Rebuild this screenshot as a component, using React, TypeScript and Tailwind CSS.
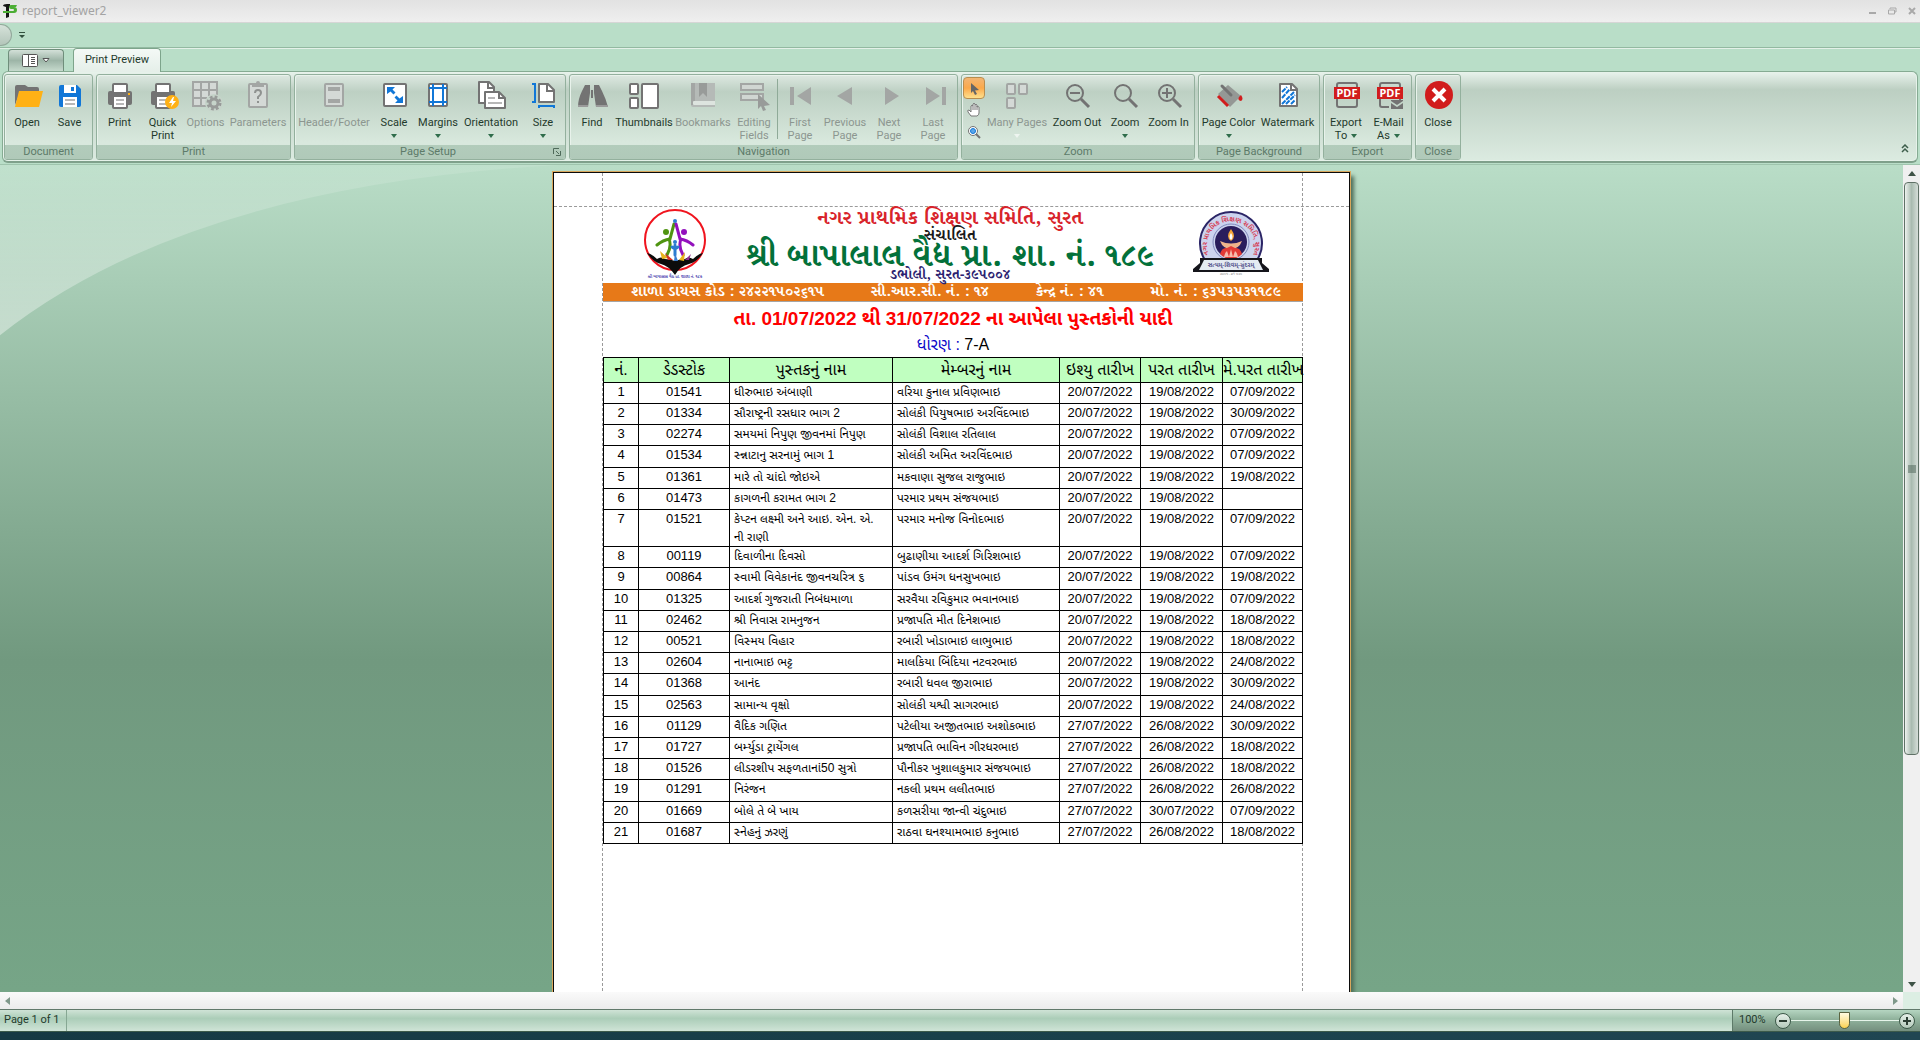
import React from 'react';

type Tool = {
  label: string;
  second?: string;
  width: string;
  icon: React.ReactNode;
  disabled?: boolean;
  menu?: boolean;
};

type Book = {
  stock: string;
  title: string;
  member: string;
  issued: string;
  due: string;
  returned: string;
};

const GRAY = '#737373';
const MUTED = '#a3a6a4';
const BLUE = '#1177d7';
const ORANGE = '#ffb115';
const RED = '#d11c1c';

const Icon: React.FC<{ children: React.ReactNode }> = ({ children }) => (
  <svg viewBox="0 0 32 32" className="h-8 w-8 shrink-0" fill="none" aria-hidden="true">
    {children}
  </svg>
);

const Printer = () => (
  <>
    <rect x="4" y="12" width="24" height="14" rx="2" fill={GRAY} />
    <rect x="8" y="4" width="16" height="10" rx="2" fill={GRAY} />
    <rect x="10" y="6" width="12" height="7" fill="#fff" />
    <rect x="8" y="18" width="16" height="12" rx="2" fill={GRAY} />
    <rect x="10" y="18" width="12" height="10" fill="#fff" />
    <path d="M12 21h8M12 25h8" stroke="#a0a0a0" strokeWidth="1.5" />
  </>
);

const Lens = () => (
  <>
    <circle cx="14" cy="13" r="8" stroke={GRAY} strokeWidth="2" />
    <path d="M20 19l8 8" stroke={GRAY} strokeWidth="3" />
  </>
);

const Pdf = () => (
  <>
    <rect x="4" y="8" width="26" height="12" fill={RED} />
    <text x="17" y="18" textAnchor="middle" fontFamily="Noto Sans, sans-serif" fontSize="11" fontWeight="700" fill="#fff">
      PDF
    </text>
  </>
);

const icons = {
  open: (
    <Icon>
      <path d="M4 26V8q0-2 2-2h8l3 2h9q2 0 2 2v3H9z" fill={GRAY} />
      <path d="M8 12h24l-4 16H4z" fill={ORANGE} />
    </Icon>
  ),
  save: (
    <Icon>
      <path d="M5 8q0-2 2-2h16l4 4v16q0 2-2 2H7q-2 0-2-2z" fill={BLUE} />
      <rect x="10" y="6" width="12" height="8" fill="#fff" />
      <rect x="17" y="8" width="3" height="4" fill={BLUE} />
      <rect x="9" y="18" width="14" height="10" fill="#fff" />
      <path d="M11 21h10M11 25h10" stroke="#a0a0a0" strokeWidth="1.5" />
    </Icon>
  ),
  print: (
    <Icon>
      <Printer />
      <rect x="24" y="14" width="2" height="2" fill={ORANGE} />
    </Icon>
  ),
  quick: (
    <Icon>
      <Printer />
      <circle cx="25" cy="23" r="7" fill={ORANGE} />
      <path d="M26 18l-4 6h3l-1 4 5-6h-3l1-4z" fill="#fff" />
    </Icon>
  ),
  options: (
    <Icon>
      <rect x="3" y="3" width="24" height="24" fill="#d4d9d6" stroke={MUTED} strokeWidth="2" />
      <path d="M11 3v24M19 3v14M3 11h24M3 19h14" stroke={MUTED} strokeWidth="2" />
      <circle cx="24" cy="24" r="9" fill="#c6d4ca" />
      <circle cx="24" cy="24" r="4" stroke="#989b99" strokeWidth="3" />
      <circle cx="24" cy="24" r="6" stroke="#989b99" strokeWidth="3" strokeDasharray="2.6 2.1" />
    </Icon>
  ),
  parameters: (
    <Icon>
      <rect x="7" y="5" width="18" height="23" rx="1" fill="#d4d9d6" stroke={MUTED} strokeWidth="2" />
      <path d="M10 8V4h4q0-2 2-2t2 2h4v4z" fill={MUTED} />
      <path d="M13 14q0-3 3-3t3 3q0 2-3 4v2" stroke="#8f9290" strokeWidth="2" />
      <rect x="15" y="22" width="2" height="2" fill="#8f9290" />
    </Icon>
  ),
  headerFooter: (
    <Icon>
      <rect x="7" y="5" width="18" height="22" rx="1" fill="#d4d9d6" stroke={MUTED} strokeWidth="2" />
      <path d="M10 10h12M10 22h12" stroke={MUTED} strokeWidth="4" />
    </Icon>
  ),
  scale: (
    <Icon>
      <rect x="6" y="5" width="22" height="22" rx="1" fill="#fff" stroke={GRAY} strokeWidth="2" />
      <path d="M9 8h8l-2.500 2.500 3 3-2 2-3-3L9 15zM25 24h-8l2.500-2.500-3-3 2-2 3 3L25 17z" fill={BLUE} />
    </Icon>
  ),
  margins: (
    <Icon>
      <rect x="7" y="5" width="18" height="22" rx="1" fill="#fff" stroke={GRAY} strokeWidth="2" />
      <path d="M11 5v22M21 5v22M7 9h18M7 23h18" stroke={BLUE} strokeWidth="2" />
    </Icon>
  ),
  orientation: (
    <Icon>
      <path d="M4 3h10l5 5v16H4z" fill="#fff" stroke={GRAY} strokeWidth="2" strokeLinejoin="round" />
      <path d="M13 3v6h6" stroke={GRAY} strokeWidth="2" />
      <path d="M10 13h14l6 6v10H10z" fill="#fff" stroke={GRAY} strokeWidth="2" strokeLinejoin="round" />
      <path d="M24 13v6h6" stroke={GRAY} strokeWidth="2" />
      <path d="M13 19h7M13 24h14" stroke="#a0a0a0" strokeWidth="1.500" />
    </Icon>
  ),
  size: (
    <Icon>
      <path d="M12 5h9l6 6v12H12z" fill="#fff" stroke={GRAY} strokeWidth="2" strokeLinejoin="round" />
      <path d="M20 5v7h7" stroke={GRAY} strokeWidth="2" />
      <path d="M5 5h3v18H5M12 29v-2h15v2" stroke={BLUE} strokeWidth="2" />
    </Icon>
  ),
  find: (
    <Icon>
      <path d="M9 6h5v8l-2 14H2q0-8 4-16zM18 6h5l3 6q4 8 6 16H20l-2-14z" fill={GRAY} />
      <path d="M16 11v8" stroke={GRAY} strokeWidth="2" />
      <path d="M2 27h10M20 27h12" stroke="#9a9a9a" strokeWidth="2" />
    </Icon>
  ),
  thumbnails: (
    <Icon>
      <g fill="#fff" stroke={GRAY} strokeWidth="2">
        <rect x="2" y="5" width="8" height="10" rx="1" />
        <rect x="2" y="19" width="8" height="10" rx="1" />
        <rect x="14" y="5" width="16" height="24" rx="1" />
      </g>
    </Icon>
  ),
  bookmarks: (
    <Icon>
      <path d="M4 26V6q0-2 2-2h22v24H6q-2 0-2-2z" fill="#b5bab7" />
      <rect x="4" y="4" width="4" height="22" fill={MUTED} />
      <path d="M6 23q0-1 1-1h21v4H7q-1 0-1-1z" fill="#dde4df" />
      <path d="M12 4h8v14l-4-4-4 4z" fill="#989b99" />
    </Icon>
  ),
  editing: (
    <Icon>
      <g fill="#d0d6d2" stroke={MUTED} strokeWidth="2">
        <rect x="3" y="5" width="22" height="6" />
        <rect x="3" y="15" width="22" height="6" />
      </g>
      <path d="M20 15l12 11-6 1 2 4-3 1-2-5-3 3z" fill="#989b99" />
    </Icon>
  ),
  first: (
    <Icon>
      <path d="M8 8v18" stroke={MUTED} strokeWidth="4" />
      <path d="M27 8v18L13 17z" fill={MUTED} />
    </Icon>
  ),
  previous: (
    <Icon>
      <path d="M23 8v18L8 17z" fill={MUTED} />
    </Icon>
  ),
  next: (
    <Icon>
      <path d="M12 8v18l14-9z" fill={MUTED} />
    </Icon>
  ),
  last: (
    <Icon>
      <path d="M9 8v18l14-9z" fill={MUTED} />
      <path d="M27 8v18" stroke={MUTED} strokeWidth="4" />
    </Icon>
  ),
  manyPages: (
    <Icon>
      <g fill="#d4d9d6" stroke={MUTED} strokeWidth="2">
        <rect x="6" y="5" width="8" height="10" rx="1" />
        <rect x="18" y="5" width="8" height="10" rx="1" />
        <rect x="6" y="19" width="8" height="10" rx="1" />
      </g>
    </Icon>
  ),
  zoomOut: (
    <Icon>
      <g transform="translate(0 1)">
        <Lens />
        <path d="M9 13h10" stroke={GRAY} strokeWidth="2" />
      </g>
    </Icon>
  ),
  zoom: (
    <Icon>
      <g transform="translate(0 1)">
        <Lens />
      </g>
    </Icon>
  ),
  zoomIn: (
    <Icon>
      <g transform="translate(0 1)">
        <Lens />
        <path d="M9 13h10M14 8v10" stroke={GRAY} strokeWidth="2" />
      </g>
    </Icon>
  ),
  pageColor: (
    <Icon>
      <path d="M15 6l13 11-11 11L5 15z" fill="#949895" />
      <path d="M5 17l10 10" stroke={RED} strokeWidth="3" />
      <path d="M9 7l9 9" stroke={GRAY} strokeWidth="3" strokeLinecap="round" />
      <path d="M28 16q3 4 0 6-4-1-2-4z" fill={RED} />
    </Icon>
  ),
  watermark: (
    <Icon>
      <path d="M8 5h12l5 5v17H8z" fill="#fff" stroke={GRAY} strokeWidth="2" strokeLinejoin="round" />
      <path d="M19 5v6h6" stroke={GRAY} strokeWidth="2" />
      <path d="M10 13l5-5M10 19l8-9M10 25l12-12M14 25l9-9M19 25l4-4" stroke={BLUE} strokeWidth="2" strokeDasharray="5 1" />
    </Icon>
  ),
  exportPdf: (
    <Icon>
      <rect x="7" y="4" width="20" height="24" rx="2" stroke={GRAY} strokeWidth="2" />
      <Pdf />
    </Icon>
  ),
  mailPdf: (
    <Icon>
      <path d="M27 22V6q0-2-2-2H9Q7 4 7 6v20q0 2 2 2h7" stroke={GRAY} strokeWidth="2" />
      <Pdf />
      <path d="M18 22l6 4 6-4v-1H18zM18 24v6h12v-6l-6 4z" fill={GRAY} />
    </Icon>
  ),
  close: (
    <Icon>
      <circle cx="17" cy="16" r="14" fill={RED} />
      <path d="M11 10l12 12M23 10L11 22" stroke="#fff" strokeWidth="4" />
    </Icon>
  ),
};

const groups: { name: string; launcher?: boolean; pointer?: boolean; tools: Tool[] }[] = [
  {
    name: 'Document',
    tools: [
      { label: 'Open', width: 'w-[42px]', icon: icons.open },
      { label: 'Save', width: 'w-[43px]', icon: icons.save },
    ],
  },
  {
    name: 'Print',
    tools: [
      { label: 'Print', width: 'w-[43px]', icon: icons.print },
      { label: 'Quick', second: 'Print', width: 'w-[43px]', icon: icons.quick },
      { label: 'Options', width: 'w-[43px]', icon: icons.options, disabled: true },
      { label: 'Parameters', width: 'w-[62px]', icon: icons.parameters, disabled: true },
    ],
  },
  {
    name: 'Page Setup',
    launcher: true,
    tools: [
      { label: 'Header/Footer', width: 'w-[76px]', icon: icons.headerFooter, disabled: true },
      { label: 'Scale', width: 'w-[44px]', icon: icons.scale, menu: true },
      { label: 'Margins', width: 'w-[44px]', icon: icons.margins, menu: true },
      { label: 'Orientation', width: 'w-[62px]', icon: icons.orientation, menu: true },
      { label: 'Size', width: 'w-[42px]', icon: icons.size, menu: true },
    ],
  },
  {
    name: 'Navigation',
    tools: [
      { label: 'Find', width: 'w-[42px]', icon: icons.find },
      { label: 'Thumbnails', width: 'w-[62px]', icon: icons.thumbnails },
      { label: 'Bookmarks', width: 'w-[56px]', icon: icons.bookmarks, disabled: true },
      { label: 'Editing', second: 'Fields', width: 'w-[46px]', icon: icons.editing, disabled: true },
      { label: 'First', second: 'Page', width: 'w-[44px]', icon: icons.first, disabled: true },
      { label: 'Previous', second: 'Page', width: 'w-[46px]', icon: icons.previous, disabled: true },
      { label: 'Next', second: 'Page', width: 'w-[42px]', icon: icons.next, disabled: true },
      { label: 'Last', second: 'Page', width: 'w-[46px]', icon: icons.last, disabled: true },
    ],
  },
  {
    name: 'Zoom',
    pointer: true,
    tools: [
      { label: 'Many Pages', width: 'w-[62px]', icon: icons.manyPages, disabled: true, menu: true },
      { label: 'Zoom Out', width: 'w-[58px]', icon: icons.zoomOut },
      { label: 'Zoom', width: 'w-[38px]', icon: icons.zoom, menu: true },
      { label: 'Zoom In', width: 'w-[49px]', icon: icons.zoomIn },
    ],
  },
  {
    name: 'Page Background',
    tools: [
      { label: 'Page Color', width: 'w-[57px]', icon: icons.pageColor, menu: true },
      { label: 'Watermark', width: 'w-[61px]', icon: icons.watermark },
    ],
  },
  {
    name: 'Export',
    tools: [
      { label: 'Export', second: 'To', width: 'w-[42px]', icon: icons.exportPdf, menu: true },
      { label: 'E-Mail', second: 'As', width: 'w-[43px]', icon: icons.mailPdf, menu: true },
    ],
  },
  { name: 'Close', tools: [{ label: 'Close', width: 'w-[42px]', icon: icons.close }] },
];

const columns = ['નં.', 'ડેડસ્ટોક', 'પુસ્તકનું નામ', 'મેમ્બરનું નામ', 'ઇશ્યુ તારીખ', 'પરત તારીખ', 'મે.પરત તારીખ'];

const book = (stock: string, title: string, member: string, issued: string, due: string, returned: string): Book => ({
  stock,
  title,
  member,
  issued,
  due,
  returned,
});

const books: Book[] = [
  book('01541', 'ધીરુભાઇ અંબાણી', 'વરિયા કુનાલ પ્રવિણભાઇ', '20/07/2022', '19/08/2022', '07/09/2022'),
  book('01334', 'સૌરાષ્ટ્રની રસધાર ભાગ 2', 'સોલંકી પિયુષભાઇ અરવિંદભાઇ', '20/07/2022', '19/08/2022', '30/09/2022'),
  book('02274', 'સમયમાં નિપુણ જીવનમાં નિપુણ', 'સોલંકી વિશાલ રતિલાલ', '20/07/2022', '19/08/2022', '07/09/2022'),
  book('01534', 'સ્ન્નાટાનુ સરનામું ભાગ 1', 'સોલંકી અમિત અરવિંદભાઇ', '20/07/2022', '19/08/2022', '07/09/2022'),
  book('01361', 'મારે તો ચાંદો જોઇએ', 'મકવાણા સુજલ રાજુભાઇ', '20/07/2022', '19/08/2022', '19/08/2022'),
  book('01473', 'કાગળની કરામત ભાગ 2', 'પરમાર પ્રથમ સંજયભાઇ', '20/07/2022', '19/08/2022', ''),
  book('01521', 'કેપ્ટન લક્ષ્મી અને આઇ. એન. એ.\nની રાણી', 'પરમાર મનોજ વિનોદભાઇ', '20/07/2022', '19/08/2022', '07/09/2022'),
  book('00119', 'દિવાળીના દિવસો', 'બુઢાણીયા આદર્શ ગિરિશભાઇ', '20/07/2022', '19/08/2022', '07/09/2022'),
  book('00864', 'સ્વામી વિવેકાનંદ જીવનચરિત્ર ૬', 'પાંડવ ઉમંગ ધનસુખભાઇ', '20/07/2022', '19/08/2022', '19/08/2022'),
  book('01325', 'આદર્શ ગુજરાતી નિબંધમાળા', 'સરવૈયા રવિકુમાર ભવાનભાઇ', '20/07/2022', '19/08/2022', '07/09/2022'),
  book('02462', 'શ્રી નિવાસ રામનુજન', 'પ્રજાપતિ મીત દિનેશભાઇ', '20/07/2022', '19/08/2022', '18/08/2022'),
  book('00521', 'વિસ્મય વિહાર', 'રબારી ખોડાભાઇ લાભુભાઇ', '20/07/2022', '19/08/2022', '18/08/2022'),
  book('02604', 'નાનાભાઇ ભટ્ટ', 'માલકિયા બિંદિયા નટવરભાઇ', '20/07/2022', '19/08/2022', '24/08/2022'),
  book('01368', 'આનંદ', 'રબારી ધવલ જીરાભાઇ', '20/07/2022', '19/08/2022', '30/09/2022'),
  book('02563', 'સામાન્ય વૃક્ષો', 'સોલંકી યશ્વી સાગરભાઇ', '20/07/2022', '19/08/2022', '24/08/2022'),
  book('01129', 'વૈદિક ગણિત', 'પટેલીયા અજીતભાઇ અશોકભાઇ', '27/07/2022', '26/08/2022', '30/09/2022'),
  book('01727', 'બર્મ્યુડા ટ્રાયેંગલ', 'પ્રજાપતિ ભાવિન ગીરધરભાઇ', '27/07/2022', '26/08/2022', '18/08/2022'),
  book('01526', 'લીડરશીપ સફળતાનાં50 સુત્રો', 'પૌનીકર ખુશાલકુમાર સંજયભાઇ', '27/07/2022', '26/08/2022', '18/08/2022'),
  book('01291', 'નિરંજન', 'નકલી પ્રથમ લલીતભાઇ', '27/07/2022', '26/08/2022', '26/08/2022'),
  book('01669', 'બોલે તે બે ખાય', 'કળસરીયા જાન્વી ચંદુભાઇ', '27/07/2022', '30/07/2022', '07/09/2022'),
  book('01687', 'સ્નેહનું ઝરણું', 'રાઠવા ઘનશ્યામભાઇ કનુભાઇ', '27/07/2022', '26/08/2022', '18/08/2022'),
];

const Caret: React.FC<{ disabled?: boolean }> = ({ disabled }) => (
  <svg viewBox="0 0 6 4" className="h-1 w-[6px] shrink-0" aria-hidden="true">
    <path d="M0 0h6L3 4z" fill={disabled ? '#eef5f0' : '#2f6d4b'} />
  </svg>
);

const ToolButton: React.FC<{ tool: Tool }> = ({ tool }) => (
  <button
    type="button"
    disabled={tool.disabled}
    className={`flex shrink-0 flex-col items-center whitespace-nowrap pt-1 ${tool.width} ${
      tool.disabled ? 'text-[#8c9690]' : 'text-[#1f3a2c]'
    }`}
  >
    {tool.icon}
    <span className="mt-[5px] leading-[13px]">{tool.label}</span>
    <span className="flex h-[13px] items-center gap-1 leading-[13px]">
      {tool.second}
      {tool.menu && <Caret disabled={tool.disabled} />}
    </span>
  </button>
);

const PointerTools = () => (
  <div className="flex w-[23px] shrink-0 flex-col items-start pt-[2px]">
    <button
      type="button"
      aria-label="Pointer"
      className="flex h-[22px] w-[22px] items-center justify-center rounded-sm border border-[#b98d4e] bg-linear-to-b from-[#f2b572] via-[#fba94a] to-[#fde08c]"
    >
      <svg viewBox="0 0 16 16" className="h-4 w-4">
        <path d="M5 3l8 7-4 .500 2 3.500-2 1-2-4-2 2z" fill="#666" />
      </svg>
    </button>
    <button type="button" aria-label="Hand Tool" className="flex h-[22px] w-[22px] items-center justify-center">
      <svg viewBox="0 0 16 16" className="h-4 w-4">
        <path
          d="M5 14l-3-4q-1-2 1-2l2 2V4q1-1.500 2 0V2q1-1.500 2 0v1q1-1.500 2 0v2q1.500-1 2 0v6q0 2-2 3zM7 4v4M9 3v5M11 4v4"
          fill="#fff"
          stroke="#777"
        />
      </svg>
    </button>
    <button type="button" aria-label="Magnifier" className="flex h-[22px] w-[22px] items-center justify-center">
      <svg viewBox="0 0 16 16" className="h-4 w-4" fill="none">
        <circle cx="7" cy="7" r="4.500" fill="#fff" stroke="#737373" />
        <circle cx="7" cy="7" r="2.500" fill="#5aa5e8" stroke={BLUE} />
        <path d="M10 10l4 4" stroke="#737373" strokeWidth="2" />
      </svg>
    </button>
  </div>
);

const Ribbon = () => (
  <div className="mx-[2px] flex h-[92px] items-start gap-[3px] rounded-md border border-[#86ab93] border-b-2 border-b-[#7fa08b] bg-linear-to-b from-[#e9f3ed] from-0% via-[#bccfc2] via-20% to-[#dcebe1] pr-2 pl-px pt-[2px] shadow-[inset_0_0_0_1px_#e6f2ea]">
    {groups.map((group) => (
      <section
        key={group.name}
        aria-label={group.name}
        className="flex h-[86px] shrink-0 flex-col overflow-hidden rounded-[3px] border border-[#93b09d] bg-linear-to-b from-[#dde8e1] from-0% via-[#bdd0c3] via-20% to-[#d8e8dd] to-80% shadow-[inset_1px_1px_0_#e8f2eb]"
      >
        <div className="flex h-[70px] px-px">
          {group.pointer && <PointerTools />}
          {group.tools.map((tool) => (
            <React.Fragment key={tool.label}>
              {tool.label === 'First' && <div className="mt-1 h-[60px] w-px shrink-0 bg-[#8faa98]" />}
              <ToolButton tool={tool} />
            </React.Fragment>
          ))}
        </div>
        <div className="flex h-[14px] items-center bg-linear-to-b from-[#b2ccbb] to-[#b0c9b9] leading-[14px] text-[#5d7a69]">
          <span className={`grow text-center ${group.launcher ? 'pl-2' : ''}`}>{group.name}</span>
          {group.launcher && (
            <button type="button" aria-label="Page Setup options" className="mr-1">
              <svg viewBox="0 0 8 8" className="h-2 w-2" fill="none">
                <path d="M6 .500H.500V6M3 3l3 3M7.500 3v4.500H3" stroke="#4f6a5a" />
              </svg>
            </button>
          )}
        </div>
      </section>
    ))}
    <button type="button" aria-label="Collapse the Ribbon" className="mt-auto mb-2 ml-auto">
      <svg viewBox="0 0 8 9" className="h-[9px] w-2" fill="none">
        <path d="M1 4l3-3 3 3M1 8l3-3 3 3" stroke="#3d5e4b" strokeWidth="1.500" />
      </svg>
    </button>
  </div>
);

const SchoolLogo = () => (
  <svg viewBox="0 0 64 72" className="h-[72px] w-16 shrink-0" role="img" aria-label="School logo">
    <circle cx="32" cy="31" r="30" fill="#fff" stroke="#f0141e" strokeWidth="2" />
    <g fill="none" strokeLinecap="round">
      <path d="M31 15L27 30q-7 1-13 6M26 30q3 7-2 16" stroke="#4f9411" strokeWidth="3" />
      <path d="M33 15l4 15q7 1 13 6M38 30q-3 7 2 16" stroke="#9311bd" strokeWidth="3" />
      <path d="M32 36v10M29 38l3 2 3-2" stroke="#2b7cd0" strokeWidth="3" />
    </g>
    <circle cx="23" cy="23" r="3" fill="#4f9411" />
    <circle cx="41" cy="23" r="3" fill="#9311bd" />
    <circle cx="32" cy="12" r="2" fill="#2b7cd0" />
    <circle cx="32" cy="33" r="2" fill="#2b7cd0" />
    <path d="M4 44q6 9 14 11 8 2 14 11 5-9 14-11 8-2 14-11-5 1-10 6-5-3-8 0-5 0-10 2-5-2-10-2-4-3-8 0-5-5-10-6z" fill="#0c0c0c" />
    <path d="M19 50l-2-8 8 7z" fill="#e8b21b" />
    <path d="M25 51l-3-7 8 7z" fill="#d53322" />
    <path d="M31 52l1-8 3 8z" fill="#3a7ed0" />
    <path d="M36 51l6-8-1 9z" fill="#e8b21b" />
    <path d="M42 51l6-6-2 6z" fill="#8c2e8e" />
    <text x="32" y="69" textAnchor="middle" fontSize="4" fontWeight="700" fill="#4a3fb0">
      શ્રી બાપાલાલ વૈદ્ય પ્રા. શાળા નં. ૧૮૯
    </text>
  </svg>
);

const BoardLogo = () => (
  <svg viewBox="0 0 76 68" className="h-[68px] w-[76px] shrink-0" role="img" aria-label="Board emblem">
    <defs>
      <path id="arch" d="M16 46A24 24 0 1 1 60 46" />
    </defs>
    <path d="M12 51A31 31 0 1 1 64 51z" fill="#ccd3ee" stroke="#2b2566" strokeWidth="2" />
    <circle cx="38" cy="33" r="18" fill="#ccd3ee" stroke="#7f88bb" />
    <circle cx="38" cy="33" r="16" fill="#2a1d5c" />
    <text fontSize="7" fontWeight="700" fill="#d6455a">
      <textPath href="#arch" startOffset="50%" textAnchor="middle">
        નગર પ્રાથમિક શિક્ષણ સમિતિ, સુરત
      </textPath>
    </text>
    <path d="M38 20q6 8 0 12-6-4 0-12z" fill="#f6a53a" />
    <path d="M38 24q3 4 0 7-3-3 0-7z" fill="#fff" />
    <path d="M27 32q11 5 22 0-3 8-11 8t-11-8z" fill="#efb48c" />
    <path d="M27 45q2-7 7-6l4-2 4 2q5-1 7 6-5 5-11 5t-11-5z" fill="#e23b36" />
    <path d="M31 48q1-5 3-6l2 6 2-8 2 8 2-6q2 1 3 6z" fill="#f6bcae" />
    <path d="M7 49h62v5l7 6v3H0v-3l7-6z" fill="#15151b" />
    <path d="M11 51h54l5 10H6z" fill="#e4ebf2" />
    <text x="38" y="58" textAnchor="middle" fontSize="6" fontWeight="700" fill="#5a5a90">
      સત્યમ્-શિવમ્-સુંદરમ્
    </text>
    <text x="38" y="66" textAnchor="middle" fontSize="3" fill="#777">
      સ્થાપના - સને ૧૯૨૫
    </text>
  </svg>
);

const Report = () => (
  <article className="relative mt-[7px] h-[1130px] w-[797px] shrink-0 border border-[#0b0b0b] bg-white font-['Liberation_Sans','Noto_Sans_Gujarati','Noto_Sans',sans-serif] text-[13px] text-black shadow-[0_0_0_1px_#d9a75c,4px_4px_4px_#4d6d58]">
    <div className="absolute inset-x-0 top-[33px] border-t border-dashed border-[#9a9a9a]" />
    <div className="absolute inset-y-0 left-12 border-l border-dashed border-[#9a9a9a]" />
    <div className="absolute inset-y-0 right-[46px] border-l border-dashed border-[#9a9a9a]" />

    <div className="relative mr-[46px] ml-[49px] pt-[34px]">
      <header>
        <div className="flex h-[76px] items-start justify-between pr-[34px] pl-10 pt-[2px]">
          <SchoolLogo />
          <div className="flex flex-col items-center font-['Noto_Serif_Gujarati','Noto_Sans_Gujarati','Liberation_Serif',serif] font-bold whitespace-nowrap">
            <p className="text-[20px] leading-5 text-[#d8232a]">નગર પ્રાથમિક શિક્ષણ સમિતિ, સુરત</p>
            <p className="text-[16px] leading-[14px] text-[#1a1a1a]">સંચાલિત</p>
            <h1 className="text-[32px] leading-[28px] text-[#03713a]">શ્રી બાપાલાલ વૈદ્ય પ્રા. શા. નં. ૧૮૯</h1>
            <p className="text-[14px] leading-2 text-[#2c2270]">ડભોલી, સુરત-૩૯૫૦૦૪</p>
          </div>
          <BoardLogo />
        </div>
        <div className="flex h-[18px] items-center justify-between bg-[#e77918] pr-[22px] pl-7 font-['Noto_Serif_Gujarati','Noto_Sans_Gujarati','Liberation_Serif',serif] text-[15px] leading-[18px] font-bold whitespace-nowrap text-white">
          <span>શાળા ડાયસ કોડ : ૨૪૨૨૧૫૦૨૬૧૫</span>
          <span>સી.આર.સી. નં. : ૧૪</span>
          <span>કેન્દ્ર નં. : ૪૧</span>
          <span>મો. નં. : ૬૩૫૩૫૩૧૧૮૯</span>
        </div>
      </header>
      <div className="border-t border-[#a5a5a5]" />
      <h2 className="mt-[2px] text-center text-[19px] leading-[30px] font-bold whitespace-nowrap text-[#fe0000]">
        તા. 01/07/2022 થી 31/07/2022 ના આપેલા પુસ્તકોની યાદી
      </h2>
      <p className="mt-px mb-[2px] text-center text-[16px] leading-5">
        <span className="text-[#0a06c8]">ધોરણ :</span> 7-A
      </p>

      <table className="w-full table-fixed border-collapse">
        <colgroup>
          <col className="w-[35px]" />
          <col className="w-[91px]" />
          <col className="w-[163px]" />
          <col className="w-[167px]" />
          <col className="w-[81px]" />
          <col className="w-[82px]" />
          <col />
        </colgroup>
        <thead>
          <tr className="h-[25px] bg-[#c0ffc0]">
            {columns.map((name) => (
              <th key={name} scope="col" className="border border-black p-0 text-[16px] leading-6 font-normal whitespace-nowrap">
                {name}
              </th>
            ))}
          </tr>
        </thead>
        <tbody>
          {books.map((row, i) => (
            <tr
              key={row.stock}
              className={`text-center align-top leading-[18px] [&>td]:border [&>td]:border-black [&>td]:p-0 ${
                i % 5 === 3 ? 'h-[22px]' : 'h-[21px]'
              }`}
            >
              <td>{i + 1}</td>
              <td>{row.stock}</td>
              <td className="text-left text-[12px]">
                <div className="pl-1 whitespace-pre-line">{row.title}</div>
              </td>
              <td className="text-left text-[12px]">
                <div className="pl-1 whitespace-nowrap">{row.member}</div>
              </td>
              <td>{row.issued}</td>
              <td>{row.due}</td>
              <td>{row.returned}</td>
            </tr>
          ))}
        </tbody>
      </table>
    </div>
  </article>
);

const StatusBar = () => (
  <footer className="flex h-[23px] shrink-0 items-stretch border-t border-[#61796b] border-b border-b-[#3c5a4a] bg-linear-to-b from-[#cfe3d6] via-[#abcdb8] via-40% to-[#cfe4d7] text-[#1f3a2c]">
    <span className="flex items-center border-r border-[#86a793] pr-[6px] pl-1">Page 1 of 1</span>
    <div className="ml-auto flex items-center border-l border-[#5d7a69] bg-linear-to-b from-[#b5d5c1] via-[#93b59f] via-40% to-[#748f7e] pr-[5px] pl-[6px]">
      <label htmlFor="zoom" className="w-9">
        100%
      </label>
      <button type="button" aria-label="Zoom out" className="h-4 w-4 rounded-full border border-[#3c5848] bg-linear-to-b from-[#e6f0e9] to-[#b4c9bb]">
        <svg viewBox="0 0 14 14" className="h-[14px] w-[14px]">
          <path d="M3 7h8" stroke="#2c3d33" strokeWidth="2" />
        </svg>
      </button>
      <input
        id="zoom"
        type="range"
        min="0"
        max="100"
        defaultValue="49"
        className="h-[18px] w-[108px] appearance-none bg-transparent [&::-webkit-slider-runnable-track]:h-px [&::-webkit-slider-runnable-track]:bg-[#e6f4ea] [&::-webkit-slider-thumb]:-mt-2 [&::-webkit-slider-thumb]:h-[17px] [&::-webkit-slider-thumb]:w-[11px] [&::-webkit-slider-thumb]:appearance-none [&::-webkit-slider-thumb]:rounded-b-md [&::-webkit-slider-thumb]:border [&::-webkit-slider-thumb]:border-[#5b6440] [&::-webkit-slider-thumb]:bg-linear-to-b [&::-webkit-slider-thumb]:from-[#fffbe0] [&::-webkit-slider-thumb]:to-[#fbd24b]"
      />
      <button type="button" aria-label="Zoom in" className="h-4 w-4 rounded-full border border-[#3c5848] bg-linear-to-b from-[#e6f0e9] to-[#b4c9bb]">
        <svg viewBox="0 0 14 14" className="h-[14px] w-[14px]">
          <path d="M3 7h8M7 3v8" stroke="#2c3d33" strokeWidth="2" />
        </svg>
      </button>
    </div>
  </footer>
);

const App: React.FC = () => (
  <div className="flex h-screen flex-col overflow-hidden bg-[#b9dec8] font-['Roboto','Noto_Sans',sans-serif] text-[11px]">
    <div className="flex h-[23px] shrink-0 items-center border-b border-[#d6d6d6] bg-linear-to-b from-[#e2e2e2] to-[#efefef] px-[2px]">
      <svg viewBox="0 0 16 16" className="h-4 w-4" aria-hidden="true">
        <path d="M1 3q0-2 4-2h3v3H7v10l-3 1V4z" fill="#151515" />
        <path d="M15 2H9q-2 0-2 2t2 2h2q1 0 1 1t-1 1H1v2h11q3 0 3-3t-3-3h-2V4h4z" fill="#4cae35" />
      </svg>
      <h1 className="ml-1 font-['Noto_Sans',sans-serif] text-[12px] text-[#a3a3a3]">report_viewer2</h1>
      <div className="mr-[2px] ml-auto flex items-center gap-[11px] text-[#a9a9a9]">
        <button type="button" aria-label="Minimize">
          <svg viewBox="0 0 8 8" className="h-2 w-2">
            <path d="M0 6h7" stroke="currentColor" strokeWidth="2" />
          </svg>
        </button>
        <button type="button" aria-label="Restore">
          <svg viewBox="0 0 9 8" className="h-2 w-[9px]" fill="none">
            <path d="M2 2V1h6v4H7M.500 3h6v4h-6z" stroke="currentColor" />
          </svg>
        </button>
        <button type="button" aria-label="Close window">
          <svg viewBox="0 0 8 8" className="h-2 w-2">
            <path d="M1 1l6 6M7 1L1 7" stroke="currentColor" strokeWidth="2" />
          </svg>
        </button>
      </div>
    </div>

    <div className="flex h-[25px] shrink-0 items-center gap-[7px] border-b border-[#93b9a1] shadow-[0_1px_0_#e3f1e8]">
      <div className="h-[22px] w-3 rounded-r-full border border-l-0 border-[#92a99b] bg-linear-to-b from-[#d6e2da] to-[#b3c6ba]" />
      <button type="button" aria-label="Customize Quick Access Toolbar">
        <svg viewBox="0 0 6 6" className="h-[6px] w-[6px]">
          <path d="M0 0h6v1H0zM0 3h6L3 6z" fill="#33513f" />
        </svg>
      </button>
    </div>

    <nav className="flex h-[23px] shrink-0 items-end gap-[9px] pl-2">
      <button
        type="button"
        aria-label="Application menu"
        className="flex h-[22px] w-14 items-center justify-center gap-1 rounded-t border border-b-0 border-[#6f8e7b] bg-linear-to-b from-[#d3e0d8] via-[#9db5a7] to-[#c6dacd]"
      >
        <svg viewBox="0 0 16 14" className="h-[14px] w-4" fill="none">
          <rect x=".500" y=".500" width="15" height="12" rx="1" fill="#fff" stroke="#555" />
          <path d="M6.500 1v11M9 3.500h4M9 5.500h4M9 7.500h4M9 9.500h4" stroke="#555" />
        </svg>
        <svg viewBox="0 0 8 5" className="h-[5px] w-2">
          <path d="M1 .500h6L4 4z" fill="#fff" stroke="#555" />
        </svg>
      </button>
      <a
        href="#preview"
        className="relative z-10 -mb-px flex h-[24px] w-[88px] items-center justify-center rounded-t border border-b-0 border-[#7da48b] bg-linear-to-b from-[#f4f9f6] to-[#e5efe9] text-[#1f3a2c]"
      >
        Print Preview
      </a>
    </nav>

    <div className="shrink-0 pb-px">
      <Ribbon />
    </div>

    <div className="flex min-h-0 flex-1 border-t border-[#9fc4ad]">
      <main id="preview" className="relative flex min-w-0 grow justify-center overflow-hidden bg-linear-to-b from-[#b9ddc7] from-0% via-[#71997f] via-60% to-[#76a587]">
        <svg viewBox="0 0 1903 826" preserveAspectRatio="none" className="absolute inset-0 h-full w-full" aria-hidden="true">
          <defs>
            <linearGradient id="swoosh" x1="0" y1="0" x2="0" y2="1">
              <stop offset="0" stopColor="#fff" stopOpacity="0.1" />
              <stop offset="1" stopColor="#fff" stopOpacity="0.4" />
            </linearGradient>
          </defs>
          <path d="M0 0h560Q190 20 0 170z" fill="url(#swoosh)" />
        </svg>
        <Report />
      </main>
      <div className="flex w-[17px] shrink-0 flex-col items-center bg-[#f0f0f0]">
        <svg viewBox="0 0 8 5" className="my-[6px] h-[5px] w-2 shrink-0">
          <path d="M4 0l4 5H0z" fill="#3f5347" />
        </svg>
        <div className="flex h-[573px] w-[15px] items-center justify-center rounded-sm border border-[#5f7166] bg-linear-to-r from-[#eef2ef] via-[#a9bbb0] to-[#d5ddd8]">
          <svg viewBox="0 0 8 8" className="h-2 w-2">
            <path d="M0 1h8M0 3h8M0 5h8M0 7h8" stroke="#4d6356" />
          </svg>
        </div>
        <svg viewBox="0 0 8 5" className="mt-auto mb-[5px] h-[5px] w-2 shrink-0">
          <path d="M0 0h8L4 5z" fill="#3f5347" />
        </svg>
      </div>
    </div>

    <div className="flex h-[17px] shrink-0 items-center bg-linear-to-b from-[#fafafa] to-[#ececec]">
      <svg viewBox="0 0 5 8" className="ml-[5px] h-2 w-[5px]">
        <path d="M5 0v8L0 4z" fill="#7f988a" />
      </svg>
      <svg viewBox="0 0 5 8" className="mr-[5px] ml-auto h-2 w-[5px]">
        <path d="M0 0v8l5-4z" fill="#7f988a" />
      </svg>
      <div className="h-full w-[17px] bg-[#dceee3]" />
    </div>

    <StatusBar />
    <div className="h-2 shrink-0 bg-linear-to-r from-[#163943] via-[#19404a] to-[#204652]" />
  </div>
);

export default App;
